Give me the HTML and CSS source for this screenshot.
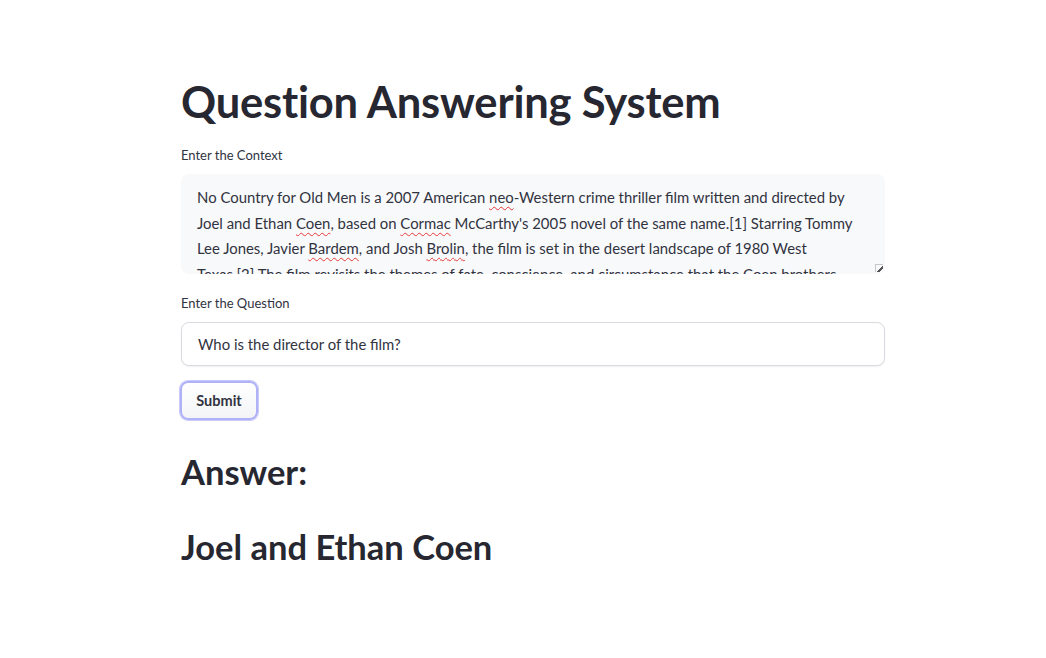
FILE: index.html
```html
<!DOCTYPE html>
<html lang="en">
<head>
<meta charset="utf-8">
<title>Question Answering System</title>
<link rel="stylesheet" href="styles.css">
</head>
<body>
<main class="main">
  <h1 class="title">Question Answering System</h1>
  <div class="field">
    <label class="label">Enter the Context</label>
    <div class="textarea">
      <div class="textarea-text">No Country for Old Men is a 2007 American <span class="sp">neo</span>-Western crime thriller film written and directed by Joel and Ethan <span class="sp">Coen</span>, based on <span class="sp">Cormac</span> McCarthy's 2005 novel of the same name.[1] Starring Tommy Lee Jones, Javier <span class="sp">Bardem</span>, and Josh <span class="sp">Brolin</span>, the film is set in the desert landscape of 1980 West <span class="nw">Texas.[2]</span> The film revisits the themes of fate, conscience, and circumstance that the Coen brothers had explored in their earlier films.</div>
      <span class="resize"></span>
    </div>
  </div>
  <div class="field field-q">
    <label class="label">Enter the Question</label>
    <div class="input">Who is the director of the film?</div>
  </div>
  <button class="btn">Submit</button>
  <h2 class="h2 answer-label">Answer:</h2>
  <h2 class="h2 answer">Joel and Ethan Coen</h2>
</main>
</body>
</html>
```
FILE: styles.css
```css
* { box-sizing: border-box; }
html, body { margin: 0; padding: 0; background: #ffffff; }
body {
  font-family: Lato, "Noto Sans", sans-serif;
  color: #262730;
}
.main {
  width: 704px;
  margin-left: 181px;
  padding-top: 74px;
  display: flex;
  flex-direction: column;
  align-items: flex-start;
}
.title {
  margin: 0;
  font-size: 43.5px;
  font-weight: 700;
  line-height: 54px;
  letter-spacing: -0.2px;
  color: #262730;
}
.field { width: 100%; display: flex; flex-direction: column; }
.label {
  font-size: 13px;
  line-height: 18px;
  margin-top: 18px;
  margin-bottom: 10px;
  color: #31333f;
}
.textarea {
  position: relative;
  width: 100%;
  height: 100px;
  background: #f8f9fb;
  border-radius: 8px;
  overflow: hidden;
  padding: 11px 22px 0 16px;
}
.textarea-text {
  font-size: 14.9px;
  line-height: 25.5px;
  color: #31333f;
}
.nw { white-space: nowrap; }
.sp {
  text-decoration: underline wavy #e53935;
  text-decoration-thickness: 1px;
  text-underline-offset: 3px;
}
.resize {
  position: absolute;
  right: 2px;
  bottom: 2px;
  width: 8px;
  height: 8px;
  border-top: 1px solid #c8c8cc;
  border-left: 1px solid #c8c8cc;
  background: linear-gradient(135deg, transparent 55%, #555 55%, #555 75%, transparent 75%);
}
.field-q .label { margin-top: 20px; }
.input {
  width: 100%;
  height: 44px;
  border: 1px solid #d9dae0;
  border-radius: 8px;
  background: #ffffff;
  padding: 0 16px;
  display: flex;
  align-items: center;
  font-size: 14.9px;
  color: #31333f;
  box-shadow: 0 1px 2px rgba(0,0,0,0.06);
}
.btn {
  margin-top: 15px;
  margin-left: -1px;
  height: 39px;
  width: 78px;
  padding: 0;
  font-family: Lato, "Noto Sans", sans-serif;
  font-size: 14.5px;
  font-weight: 700;
  color: #31333f;
  background: linear-gradient(#ffffff, #f3f4f6);
  border: 2px solid #b0b2f7;
  border-radius: 8px;
  box-shadow: 0 0 0 1px #c9caf9;
}
.h2 {
  margin: 0;
  font-size: 34.5px;
  font-weight: 700;
  color: #262730;
  line-height: 40px;
}
.answer-label { margin-top: 32px; }
.answer { margin-top: 35px; }
```
